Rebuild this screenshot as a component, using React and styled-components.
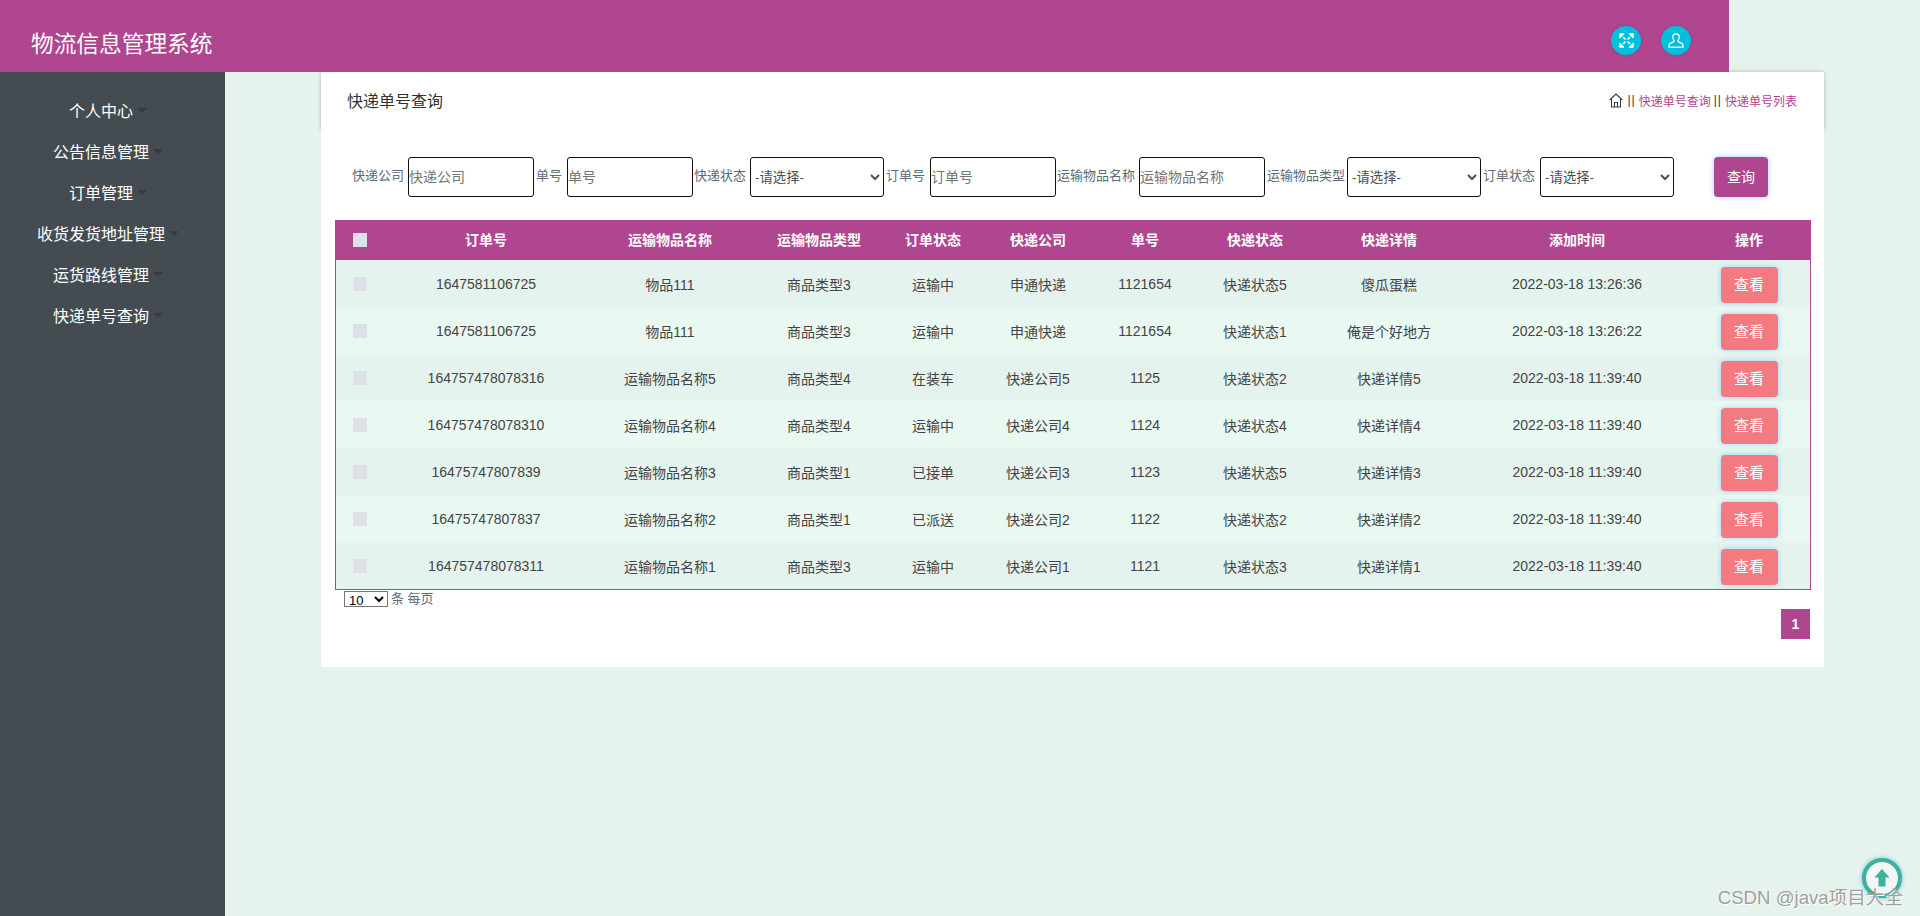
import styled, { createGlobalStyle } from 'styled-components'

const GlobalStyle = createGlobalStyle`
html, body {
  margin: 0;
  padding: 0;
  height: 100%;
  overflow: hidden;
  background: #e6f3ec;
  font-family: "Liberation Sans", "Noto Sans CJK SC", sans-serif;
  font-size: 14px;
  color: #444;
}
* { box-sizing: border-box; }
`
const Page = styled.div`
width: 1920px;
height: 916px;
position: relative;
overflow: hidden;
`
const Header = styled.header`
position: relative;
z-index: 1;
display: flex;
align-items: center;
justify-content: space-between;
width: 1729px;
height: 72px;
padding: 12px 38px 0 31px;
background: #b04590;
`
const Title = styled.h1`
margin: 0;
font-size: 22.7px;
font-weight: 400;
color: #fff;
`
const HeaderIcons = styled.div`
display: flex;
gap: 20px;
padding-bottom: 3px;
`
const RoundIcon = styled.span`
display: flex;
align-items: center;
justify-content: center;
width: 30px;
height: 29px;
border-radius: 50%;
background: #00c0dd;
box-shadow: 0 0 3px rgba(70, 60, 130, .4);
color: #fff;
`
const Body = styled.div`
display: flex;
height: 844px;
`
const Sidebar = styled.nav`
display: flex;
flex-direction: column;
gap: 17px;
width: 225px;
padding: 26px 9px 0 0;
background: #454c51;
`
const MenuItem = styled.a`
display: flex;
align-items: center;
justify-content: center;
height: 24px;
font-size: 16px;
color: #fff;
&::after {
  content: "";
  margin-left: 4px;
  border-top: 5px solid #363b40;
  border-left: 5px solid transparent;
  border-right: 5px solid transparent;
}
`
const Main = styled.main`
width: 1503px;
height: 595px;
margin-left: 96px;
background: #fff;
`
const TitleBar = styled.div`
display: flex;
align-items: center;
justify-content: space-between;
height: 58px;
padding: 0 27px 2px 26px;
box-shadow: 0 0 4px rgba(90, 110, 160, .45);
`
const PageTitle = styled.h2`
margin: 0;
font-size: 16px;
font-weight: 400;
color: #333;
`
const Crumbs = styled.div`
display: flex;
align-items: center;
gap: 3px;
font-size: 12px;
color: #b04590;
svg { margin-right: 2px; }
`
const CrumbSep = styled.span`
color: #333;
letter-spacing: 1px;
`
const Content = styled.div`
position: relative;
height: 537px;
background: #fff;
`
const Filters = styled.form`
display: flex;
align-items: center;
height: 40px;
padding: 27px 0 0 31px;
box-sizing: content-box;
margin-bottom: 23px;
`
const Field = styled.label`
display: flex;
align-items: center;
gap: ${p => p.$gap || 4}px;
margin-right: ${p => p.$after || 2}px;
font-size: 13px;
color: #5d6b78;
`
const FieldText = styled.span`
padding-bottom: 6px;
`
const TextInput = styled.input`
width: 126px;
height: 40px;
padding: 0;
border: 1px solid #111;
border-radius: 3px;
background: #fff;
font-family: inherit;
font-size: 14px;
&::placeholder { color: #757575; }
`
const Picker = styled.select`
width: 134px;
height: 40px;
padding: 0;
border: 1px solid #111;
border-radius: 3px;
background: #fff;
color: #495057;
font-family: inherit;
font-size: 13.33px;
`
const SearchButton = styled.button`
width: 54px;
height: 40px;
margin-left: 38px;
padding: 0 0 3px;
border: 0;
border-radius: 4px;
background: #b04590;
box-shadow: 0 0 5px rgba(100, 170, 255, .6);
color: #fff;
font-family: inherit;
font-size: 14px;
`
const TableWrap = styled.div`
margin: 0 13px 0 14px;
border: 1px solid #b04590;
border-width: 0 1px 1px 1px;
`
const Table = styled.table`
width: 100%;
border-collapse: collapse;
table-layout: fixed;
`
const HeadRow = styled.tr`
height: 40px;
background: #b04590;
`
const HeadCell = styled.th`
padding: 0 ${p => p.$pad || 0}px 0 0;
font-size: 14px;
font-weight: 700;
color: #fff;
text-align: center;
`
const HeadLabel = styled.span`
display: block;
padding-bottom: 2px;
`
const Row = styled.tr`
height: 47px;
background: ${p => p.$odd ? '#e4f3ed' : '#e9f8f1'};
`
const Cell = styled.td`
padding: 0 ${p => p.$pad || 0}px 0 0;
font-size: 14px;
color: #444;
text-align: center;
`
const Check = styled.span`
display: block;
width: 14px;
height: 14px;
margin: 0 auto;
background: #dee0e7;
`
const ViewButton = styled.button`
display: block;
width: 57px;
height: 36px;
margin: 3px auto 0;
padding: 0 0 3px;
border: 0;
border-radius: 4px;
background: #f47a82;
box-shadow: 0 0 5px rgba(100, 180, 255, .6);
color: #fff;
font-family: inherit;
font-size: 15px;
`
const Footer = styled.div`
display: flex;
justify-content: space-between;
padding: 1px 14px 0 23px;
`
const PageSize = styled.div`
display: flex;
align-items: center;
gap: 3px;
height: 16px;
font-size: 13px;
color: #5d6b78;
`
const PageSizeText = styled.span`
padding-bottom: 3px;
`
const SizeSelect = styled.select`
width: 44px;
height: 16px;
padding: 0;
font-size: 13px;
font-family: inherit;
background: #fff;
`
const PageNumber = styled.span`
display: flex;
align-items: center;
justify-content: center;
width: 29px;
height: 30px;
margin-top: 18px;
background: #b04590;
color: #fff;
font-size: 14px;
font-weight: 700;
`
const BackTop = styled.div`
position: absolute;
left: 1862px;
top: 858px;
display: flex;
align-items: center;
justify-content: center;
width: 40px;
height: 40px;
border: 4px solid #3bb39a;
border-radius: 50%;
background: #f5f5f5;
box-shadow: 0 0 4px rgba(80, 170, 230, .8);
`
const Watermark = styled.div`
position: absolute;
right: 17px;
top: 882px;
font-size: 18.6px;
color: #a0a0a0;
text-shadow: 1px 1px 0 #fff;
`

const columns = [
  { key: 'order', label: '订单号', width: 196 },
  { key: 'name', label: '运输物品名称', width: 172 },
  { key: 'type', label: '运输物品类型', width: 126 },
  { key: 'state', label: '订单状态', width: 102 },
  { key: 'company', label: '快递公司', width: 108 },
  { key: 'no', label: '单号', width: 106 },
  { key: 'status', label: '快递状态', width: 114 },
  { key: 'detail', label: '快递详情', width: 154 },
  { key: 'time', label: '添加时间', width: 222 },
]

const rows = [
  { order: '1647581106725', name: '物品111', type: '商品类型3', state: '运输中', company: '申通快递', no: '1121654', status: '快递状态5', detail: '傻瓜蛋糕', time: '2022-03-18 13:26:36' },
  { order: '1647581106725', name: '物品111', type: '商品类型3', state: '运输中', company: '申通快递', no: '1121654', status: '快递状态1', detail: '俺是个好地方', time: '2022-03-18 13:26:22' },
  { order: '164757478078316', name: '运输物品名称5', type: '商品类型4', state: '在装车', company: '快递公司5', no: '1125', status: '快递状态2', detail: '快递详情5', time: '2022-03-18 11:39:40' },
  { order: '164757478078310', name: '运输物品名称4', type: '商品类型4', state: '运输中', company: '快递公司4', no: '1124', status: '快递状态4', detail: '快递详情4', time: '2022-03-18 11:39:40' },
  { order: '16475747807839', name: '运输物品名称3', type: '商品类型1', state: '已接单', company: '快递公司3', no: '1123', status: '快递状态5', detail: '快递详情3', time: '2022-03-18 11:39:40' },
  { order: '16475747807837', name: '运输物品名称2', type: '商品类型1', state: '已派送', company: '快递公司2', no: '1122', status: '快递状态2', detail: '快递详情2', time: '2022-03-18 11:39:40' },
  { order: '164757478078311', name: '运输物品名称1', type: '商品类型3', state: '运输中', company: '快递公司1', no: '1121', status: '快递状态3', detail: '快递详情1', time: '2022-03-18 11:39:40' },
]

const menu = ['个人中心', '公告信息管理', '订单管理', '收货发货地址管理', '运货路线管理', '快递单号查询']

function ExpandIcon() {
  return (
    <svg width="15" height="15" viewBox="0 0 15 15" fill="#fff" stroke="#fff" strokeWidth="1.6">
      <path d="M4 4l2.500 2.500M11 4 8.500 6.500M4 11l2.500-2.500M11 11 8.500 8.500" fill="none" />
      <path strokeWidth="1" d="M.8.800h4.200L.8 5zM14.200.800H10L14.200 5zM.8 14.200h4.200L.8 10zM14.200 14.200H10l4.200-4.200z" />
    </svg>
  )
}

function UserIcon() {
  return (
    <svg width="16" height="15" viewBox="0 0 16 15" fill="none" stroke="#fff" strokeWidth="1.3">
      <path d="M8 .8C5.900.8 4.700 2.300 4.700 4.300c0 1.300.6 2.300 1.300 3 .3.800 0 1.400-.9 1.800L2.600 10.200c-1 .4-1.600 1-1.600 2v2h14v-2c0-1-.6-1.600-1.600-2l-2.500-1.100c-.9-.4-1.200-1-.9-1.800.7-.7 1.300-1.700 1.300-3C11.300 2.300 10.100.8 8 .8z" />
    </svg>
  )
}

function HomeIcon() {
  return (
    <svg width="14" height="15" viewBox="0 0 14 15" fill="none" stroke="#2f3f4a" strokeWidth="1.1">
      <path d="M.6 7 7 1l6.400 6" />
      <path d="M2.500 6v8h9V6" />
      <path d="M5.500 14V9.500h3V14" />
    </svg>
  )
}

function ArrowUpIcon() {
  return (
    <svg width="16" height="20" viewBox="0 0 16 20" fill="#3bb39a">
      <path d="M8 1 15.500 9.500H11.500V18.500H4.500V9.500H.5z" />
    </svg>
  )
}

export default function App() {
  return (
    <Page>
      <GlobalStyle />
      <Header>
        <Title>物流信息管理系统</Title>
        <HeaderIcons>
          <RoundIcon><ExpandIcon /></RoundIcon>
          <RoundIcon><UserIcon /></RoundIcon>
        </HeaderIcons>
      </Header>
      <Body>
        <Sidebar>
          {menu.map(item => <MenuItem key={item}>{item}</MenuItem>)}
        </Sidebar>
        <Main>
          <TitleBar>
            <PageTitle>快递单号查询</PageTitle>
            <Crumbs>
              <HomeIcon />
              <CrumbSep>||</CrumbSep>
              <span>快递单号查询</span>
              <CrumbSep>||</CrumbSep>
              <span>快递单号列表</span>
            </Crumbs>
          </TitleBar>
          <Content>
            <Filters>
              <Field><FieldText>快递公司</FieldText><TextInput placeholder="快递公司" /></Field>
              <Field $gap={5} $after={1}><FieldText>单号</FieldText><TextInput placeholder="单号" /></Field>
              <Field><FieldText>快递状态</FieldText><Picker><option>-请选择-</option></Picker></Field>
              <Field $gap={5} $after={1}><FieldText>订单号</FieldText><TextInput placeholder="订单号" /></Field>
              <Field><FieldText>运输物品名称</FieldText><TextInput placeholder="运输物品名称" /></Field>
              <Field $gap={2}><FieldText>运输物品类型</FieldText><Picker><option>-请选择-</option></Picker></Field>
              <Field $gap={5}><FieldText>订单状态</FieldText><Picker><option>-请选择-</option></Picker></Field>
              <SearchButton type="button">查询</SearchButton>
            </Filters>
            <TableWrap>
              <Table>
                <colgroup>
                  <col width="52" />
                  {columns.map(col => <col key={col.key} width={col.width} />)}
                  <col />
                </colgroup>
                <thead>
                  <HeadRow>
                    <HeadCell $pad={4}><Check /></HeadCell>
                    {columns.map(col => <HeadCell key={col.key}><HeadLabel>{col.label}</HeadLabel></HeadCell>)}
                    <HeadCell><HeadLabel>操作</HeadLabel></HeadCell>
                  </HeadRow>
                </thead>
                <tbody>
                  {rows.map((row, i) => (
                    <Row key={i} $odd={i % 2 === 0}>
                      <Cell $pad={4}><Check /></Cell>
                      {columns.map(col => <Cell key={col.key}>{row[col.key]}</Cell>)}
                      <Cell><ViewButton type="button">查看</ViewButton></Cell>
                    </Row>
                  ))}
                </tbody>
              </Table>
            </TableWrap>
            <Footer>
              <PageSize>
                <SizeSelect><option>10</option></SizeSelect>
                <PageSizeText>条 每页</PageSizeText>
              </PageSize>
              <PageNumber>1</PageNumber>
            </Footer>
          </Content>
        </Main>
      </Body>
      <BackTop><ArrowUpIcon /></BackTop>
      <Watermark>CSDN @java项目大全</Watermark>
    </Page>
  )
}
